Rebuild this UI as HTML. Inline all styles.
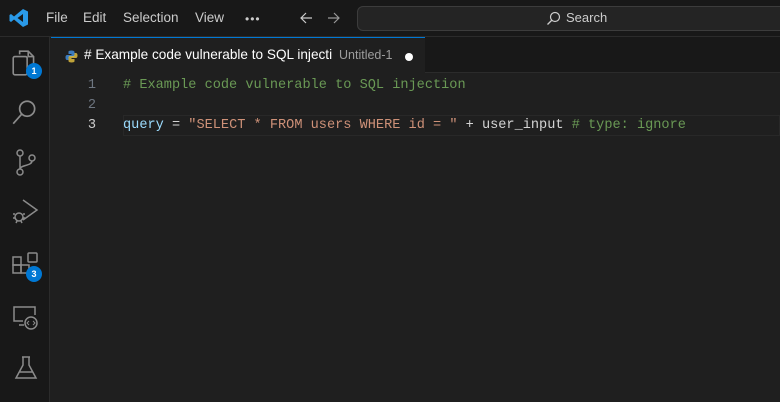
<!DOCTYPE html>
<html><head><meta charset="utf-8"><style>
*{margin:0;padding:0;box-sizing:border-box}
body{width:780px;height:402px;background:#1f1f1f;overflow:hidden;position:relative;font-family:"Segoe UI","Liberation Sans",sans-serif;color:#ccc}
.title{position:absolute;left:0;top:0;width:780px;height:37px;background:#181818;border-bottom:1px solid #2b2b2b}
.menu{position:absolute;top:10px;font-size:13.5px;color:#cccccc}
.search{position:absolute;left:357px;top:6px;width:440px;height:25px;border:1px solid #3c3c3c;border-radius:6px;background:#242424;font-size:13px;color:#ccc}
.act{position:absolute;left:0;top:37px;width:50px;height:365px;background:#181818;border-right:1px solid #2b2b2b}
.tabbar{position:absolute;left:51px;top:37px;width:729px;height:36px;background:#181818;border-bottom:1px solid #2b2b2b}
.tab{position:absolute;left:0;top:0;width:374px;height:36px;background:#1f1f1f;border-top:1px solid #0078d4}
.code{position:absolute;font-family:"Liberation Mono",monospace;font-size:13.6px;line-height:20px;white-space:pre}
.ln{position:absolute;left:70px;width:26px;text-align:right;font-family:"Liberation Mono",monospace;font-size:13.6px;color:#6e7681}
.badge{position:absolute;width:16px;height:16px;border-radius:8px;background:#0078d4;color:#fff;font-size:9px;font-weight:bold;text-align:center;line-height:16px}
svg{position:absolute}
</style></head><body>
<div class="title">
<svg style="left:9px;top:8px" width="20" height="20" viewBox="0 0 20 20"><path d="M14 1 L19 3.5 V16.5 L14 19 L5 11.5 L2 14 L0.5 13 V7 L2 6 L5 8.5 Z M14 6 L8.5 10 L14 14 Z" fill="#2a9ae8" fill-rule="evenodd"/></svg>
<span class="menu" style="left:46px">File</span>
<span class="menu" style="left:83px">Edit</span>
<span class="menu" style="left:123px">Selection</span>
<span class="menu" style="left:195px">View</span>
<span class="menu" style="left:245px;top:12px;font-size:12px;letter-spacing:1px">•••</span>
<svg style="left:298px;top:10px" width="16" height="16" viewBox="0 0 16 16"><path d="M14 8H3M8 3L3 8l5 5" stroke="#ccc" stroke-width="1.2" fill="none"/></svg>
<svg style="left:326px;top:10px" width="16" height="16" viewBox="0 0 16 16"><path d="M2 8h11M8 3l5 5-5 5" stroke="#999" stroke-width="1.2" fill="none"/></svg>
<div class="search"><svg style="left:188px;top:4px" width="15" height="15" viewBox="0 0 15 15"><circle cx="9" cy="6" r="4.5" stroke="#ccc" fill="none" stroke-width="1.2"/><path d="M6 9L1.5 13.5" stroke="#ccc" stroke-width="1.3"/></svg><span style="position:absolute;left:208px;top:3px">Search</span></div>
</div>
<div class="act">
<svg style="left:11px;top:11px" width="28" height="30" viewBox="0 0 26 28" fill="none" stroke="#8b8b8b" stroke-width="1.5"><path d="M8 6V3h8l5 5v13h-5"/><path d="M16 3v5h5"/><rect x="2" y="8" width="13" height="17" rx="1.5"/></svg>
<div class="badge" style="left:26px;top:26px">1</div>
<svg style="left:11px;top:61px" width="28" height="30" viewBox="0 0 26 28" fill="none" stroke="#8b8b8b" stroke-width="1.6"><circle cx="15" cy="10" r="7"/><path d="M10 15L2 24"/></svg>
<svg style="left:14px;top:111px" width="24" height="30" viewBox="0 0 24 30" fill="none" stroke="#8b8b8b" stroke-width="1.5"><circle cx="6" cy="5" r="3"/><circle cx="6" cy="24" r="3"/><circle cx="18" cy="10" r="3"/><path d="M6 8v13M18 13c0 5-12 4-12 8"/></svg>
<svg style="left:12px;top:160px" width="28" height="30" viewBox="0 0 28 30" fill="none" stroke="#8b8b8b" stroke-width="1.5"><path d="M11 3l14 10-14 10"/><circle cx="7" cy="20" r="4"/><path d="M1 17h2M1 21h2M11 17h2M11 21h2M4 26l1-2M10 26l-1-2"/></svg>
<svg style="left:12px;top:215px" width="30" height="30" viewBox="0 0 30 30" fill="none" stroke="#8b8b8b" stroke-width="1.5"><rect x="1" y="5" width="8" height="8"/><rect x="1" y="13" width="8" height="8"/><rect x="9" y="13" width="8" height="8"/><rect x="16" y="1" width="9" height="9" rx="1"/></svg>
<div class="badge" style="left:26px;top:229px">3</div>
<svg style="left:12px;top:267px" width="28" height="28" viewBox="0 0 28 28" fill="none" stroke="#8b8b8b" stroke-width="1.5"><path d="M11 17H2V3h21v8"/><path d="M7 21h5"/><circle cx="19" cy="19" r="6"/><path d="M17 17l-2 2 2 2M21 17l2 2-2 2" stroke-width="1"/></svg>
<svg style="left:14px;top:318px" width="24" height="26" viewBox="0 0 24 26" fill="none" stroke="#8b8b8b" stroke-width="1.5"><path d="M8 2h8M9 2v8L2 23h20L15 10V2M5 17h14"/></svg>
</div>
<div class="tabbar"><div class="tab">
<svg style="left:14px;top:12px" width="13" height="13" viewBox="0 0 13 13"><path d="M6.5 0.5C3 0.5 3.5 2 3.5 2v2h3v1H2S0.5 5 0.5 7.5 2 10 2 10h1.5V8.5S3.5 7 5 7h3s1.5 0 1.5-1.5V2S9.5 0.5 6.5 0.5z" fill="#3b7bbf"/><path d="M6.5 12.5c3.5 0 3-1.5 3-1.5V9h-3V8H11s1.5 0 1.5-2.5S11 3 11 3H9.5v1.5S9.5 6 8 6H5S3.5 6 3.5 7.5V11s0 1.5 3 1.5z" fill="#e8c440" opacity=".8"/></svg>
<span style="position:absolute;left:33px;top:9px;font-size:13.6px;color:#fff">#&nbsp;Example code vulnerable to SQL injecti</span>
<span style="position:absolute;left:288px;top:10px;font-size:12.5px;color:#9d9d9d">Untitled-1</span>
<div style="position:absolute;left:354px;top:15px;width:8px;height:8px;border-radius:4px;background:#fff"></div>
</div></div>
<div style="position:absolute;left:123px;top:115px;width:657px;height:21px;border:1px solid #282828"></div>
<div class="ln" style="top:76px;line-height:20px">1</div>
<div class="ln" style="top:96px;line-height:20px">2</div>
<div class="ln" style="top:116px;line-height:20px;color:#ccc">3</div>
<div class="code" style="left:123px;top:76px;color:#6a9955"># Example code vulnerable to SQL injection</div>
<div class="code" style="left:123px;top:116px;color:#d4d4d4"><span style="color:#9cdcfe">query</span> = <span style="color:#ce9178">"SELECT * FROM users WHERE id = "</span> + user_input <span style="color:#6a9955"># type: ignore</span></div>
</body></html>
